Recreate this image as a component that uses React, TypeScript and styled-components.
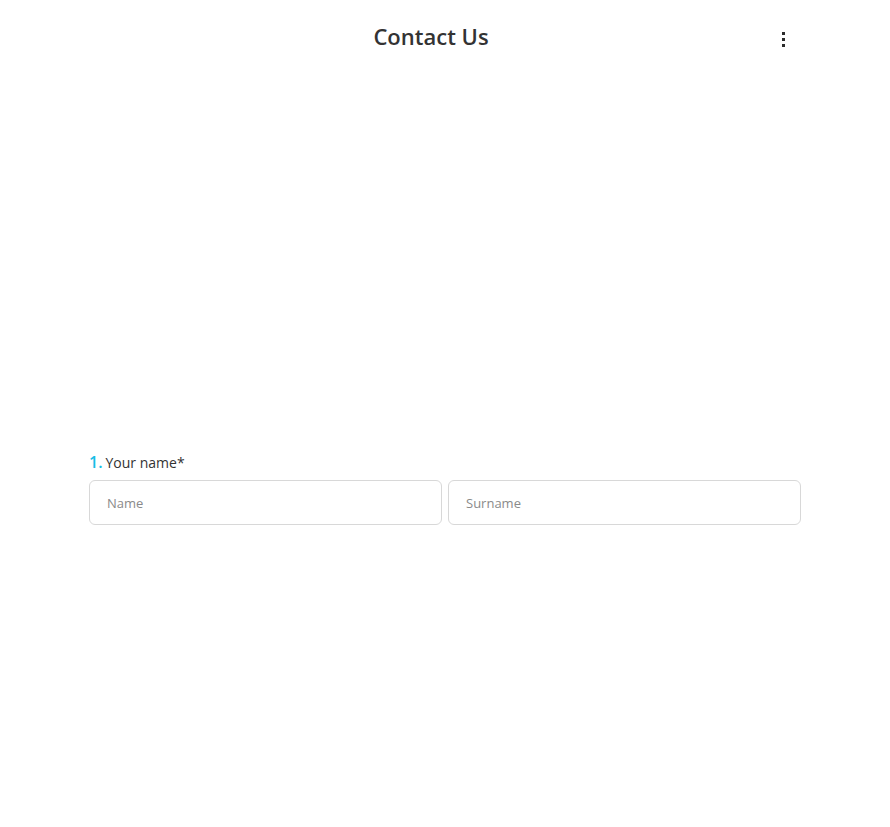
import React from 'react'
import styled, { createGlobalStyle } from 'styled-components'

const GlobalStyle = createGlobalStyle`
  html, body {
    margin: 0;
    padding: 0;
    background: #fff;
  }
  body {
    font-family: 'Open Sans', 'Noto Sans', sans-serif;
    color: #333;
  }
`

const Page = styled.div`
  width: 712px;
  margin: 0 auto;
  min-height: 827px;
`

const Header = styled.header`
  display: flex;
  align-items: center;
  height: 73px;
`

const Title = styled.h1`
  flex: 1;
  margin: -2px 0 0;
  text-align: center;
  font-size: 22px;
  font-weight: 600;
  color: #333;
`

const MenuButton = styled.button`
  width: 28px;
  height: 28px;
  border: 0;
  padding: 0 8px 0 0;
  background: transparent;
  display: flex;
  flex-direction: column;
  align-items: center;
  justify-content: center;
  gap: 3px;
  margin-top: 5px;
  cursor: pointer;
`

const Dot = styled.span`
  width: 3px;
  height: 3px;
  background: #2b2b2b;
`

const Form = styled.form`
  padding-top: 378px;
`

const Question = styled.div`
  display: flex;
  flex-direction: column;
  gap: 7px;
`

const Label = styled.label`
  font-size: 14px;
  color: #333;
  display: flex;
  align-items: baseline;
`

const Number = styled.span`
  color: #17bde6;
  font-size: 16px;
  font-weight: 600;
  margin-right: 3px;
`

const Row = styled.div`
  display: grid;
  grid-template-columns: 1fr 1fr;
  gap: 6px;
`

const Input = styled.input`
  box-sizing: border-box;
  height: 45px;
  padding: 0 17px;
  border: 1px solid #d8d8d8;
  border-radius: 6px;
  font-family: 'Open Sans', sans-serif;
  font-size: 13px;
  color: #333;
  outline: none;
  &::placeholder {
    color: #8a8a8a;
  }
`

export default function App() {
  return (
    <>
      <GlobalStyle />
      <Page>
        <Header>
          <Title>Contact Us</Title>
          <MenuButton aria-label="More">
            <Dot />
            <Dot />
            <Dot />
          </MenuButton>
        </Header>
        <Form>
          <Question>
            <Label>
              <Number>1.</Number>Your name*
            </Label>
            <Row>
              <Input placeholder="Name" />
              <Input placeholder="Surname" />
            </Row>
          </Question>
        </Form>
      </Page>
    </>
  )
}
